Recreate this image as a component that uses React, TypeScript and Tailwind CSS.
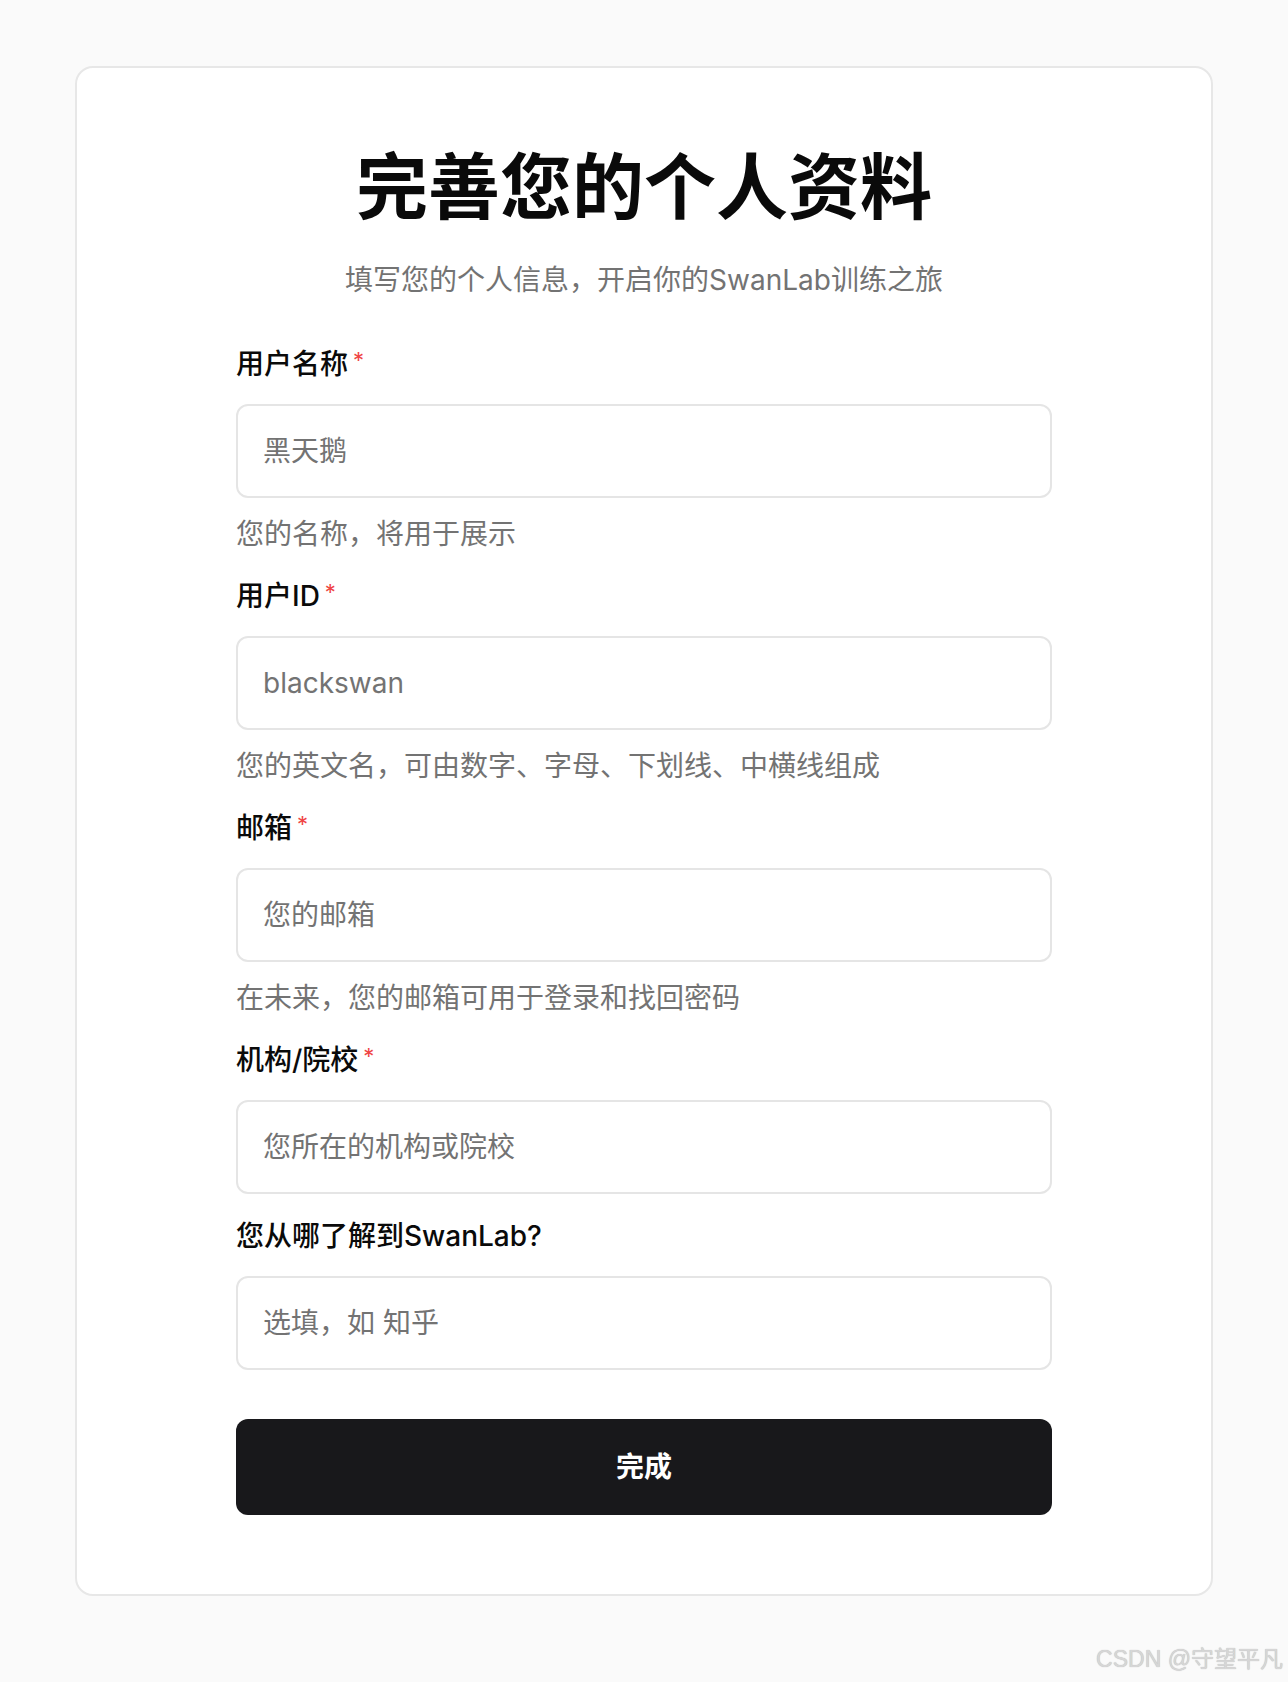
import React from "react";

type Field = {
  label: string;
  required: boolean;
  placeholder: string;
  helper?: string;
};

const fields: Field[] = [
  { label: "用户名称", required: true, placeholder: "黑天鹅", helper: "您的名称，将用于展示" },
  { label: "用户ID", required: true, placeholder: "blackswan", helper: "您的英文名，可由数字、字母、下划线、中横线组成" },
  { label: "邮箱", required: true, placeholder: "您的邮箱", helper: "在未来，您的邮箱可用于登录和找回密码" },
  { label: "机构/院校", required: true, placeholder: "您所在的机构或院校" },
  { label: "您从哪了解到SwanLab?", required: false, placeholder: "选填，如 知乎" },
];

export default function App() {
  return (
    <div className="relative min-h-[1682px] w-full bg-[#fafafa] pt-[66px] font-['Inter','Noto_Sans_CJK_SC',sans-serif]">
      <div className="mx-[75px] rounded-[18px] border-2 border-[#e7e7e7] bg-white pt-[79px] pb-[79px]">
        <h1 className="text-center text-[72px] leading-[80px] font-bold text-[#0a0a0a]">
          完善您的个人资料
        </h1>
        <p className="mt-[33px] text-center text-[28px] leading-[40px] text-[#737373]">
          填写您的个人信息，开启你的SwanLab训练之旅
        </p>
        <form className="mx-auto mt-[44px] flex w-[816px] flex-col gap-[22px]">
          {fields.map((f) => (
            <div key={f.label} className="flex flex-col">
              <label className="flex items-start text-[28px] leading-[40px] font-medium text-[#0a0a0a]">
                <span>{f.label}</span>
                {f.required && (
                  <span className="ml-[5px] mt-[3px] text-[22px] leading-[26px] font-normal text-[#ef4444]">*</span>
                )}
              </label>
              <input
                type="text"
                placeholder={f.placeholder}
                className="mt-[20px] h-[94px] w-full rounded-[12px] border-2 border-[#e5e5e5] bg-white px-[25px] text-[28px] text-[#0a0a0a] outline-none placeholder:text-[#737373]"
              />
              {f.helper && (
                <p className="mt-[16px] text-[28px] leading-[40px] text-[#737373]">{f.helper}</p>
              )}
            </div>
          ))}
          <button
            type="button"
            className="mt-[27px] h-[96px] w-full rounded-[12px] bg-[#18181b] text-[28px] font-semibold text-white"
          >
            完成
          </button>
        </form>
      </div>
      <div className="absolute right-[5px] bottom-[8px] text-[23px] leading-[30px] text-[#d6d6d6] font-['Liberation_Sans','Noto_Sans_CJK_SC',sans-serif] [text-shadow:0_0_1px_rgba(0,0,0,0.3)]">
        CSDN @守望平凡
      </div>
    </div>
  );
}
